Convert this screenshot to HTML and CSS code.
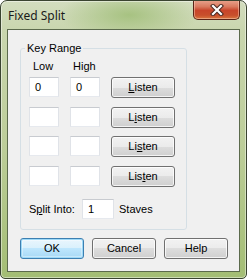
FILE: index.html
```html
<!DOCTYPE html>
<html>
<head>
<meta charset="utf-8">
<link rel="stylesheet" href="styles.css">
</head>
<body>
<div class="window">
  <div class="titlebar">
    <span class="title">Fixed Split</span>
    <div class="close">
      <svg width="14" height="12" viewBox="0 0 14 12">
        <path d="M3 2 L11 10 M11 2 L3 10" stroke="#4a2a22" stroke-width="4.2" stroke-linecap="square" fill="none"/>
        <path d="M3 2 L11 10 M11 2 L3 10" stroke="#ffffff" stroke-width="2.2" stroke-linecap="square" fill="none"/>
      </svg>
    </div>
  </div>
  <div class="client">
    <fieldset class="group">
      <legend>Key Range</legend>
      <div class="group-body">
        <div class="grid">
          <span class="col-label low">Low</span>
          <span class="col-label high">High</span>
          <span class="col-label"></span>
          <div class="edit">0</div>
          <div class="edit">0</div>
          <div class="btn"><u>L</u>isten</div>
          <div class="edit"></div>
          <div class="edit"></div>
          <div class="btn">L<u>i</u>sten</div>
          <div class="edit"></div>
          <div class="edit"></div>
          <div class="btn">Li<u>s</u>ten</div>
          <div class="edit"></div>
          <div class="edit"></div>
          <div class="btn">Lis<u>t</u>en</div>
        </div>
        <div class="split-row">
          <span class="split-label">S<u>p</u>lit Into:</span>
          <div class="edit split">1</div>
          <span class="staves">Staves</span>
        </div>
      </div>
    </fieldset>
    <div class="actions">
      <div class="btn default">OK</div>
      <div class="btn">Cancel</div>
      <div class="btn">Help</div>
    </div>
  </div>
</div>
</body>
</html>
```

FILE: styles.css
```css
html, body {
  margin: 0;
  padding: 0;
  background: #ffffff;
}

.window {
  box-sizing: border-box;
  width: 247px;
  height: 279px;
  border: 1px solid #3a4430;
  border-radius: 7px 7px 5px 5px;
  background:
    radial-gradient(ellipse 70px 26px at 128px 14px, rgba(160, 190, 120, 0.85), rgba(160, 190, 120, 0) 100%),
    linear-gradient(to bottom, #d3ddbf 0px, #c9d6ae 30px, #bccd98 150px, #a3bd74 100%);
  box-shadow: inset 0 0 0 1px rgba(255, 255, 255, 0.45);
  display: flex;
  flex-direction: column;
  overflow: hidden;
  font-family: "Liberation Sans", Arial, sans-serif;
  font-size: 11px;
  color: #000;
}

.titlebar {
  height: 28px;
  display: flex;
  align-items: flex-start;
  justify-content: space-between;
}

.title {
  font-family: "Noto Sans", "Liberation Sans", sans-serif;
  font-size: 12px;
  line-height: 16px;
  color: #1a1a1a;
  margin: 7px 0 0 7px;
}

.close {
  box-sizing: border-box;
  width: 47px;
  height: 20px;
  margin: -1px 6px 0 0;
  border: 1px solid #5a2417;
  border-top: none;
  border-radius: 0 0 5px 5px;
  background: linear-gradient(to bottom, #e9a58f 0%, #d97a5f 35%, #c8452a 55%, #c84f2c 80%, #d9773f 100%);
  box-shadow: inset 0 0 0 1px rgba(255, 220, 200, 0.45);
  display: flex;
  align-items: center;
  justify-content: center;
}

.close svg {
  display: block;
}

.client {
  box-sizing: border-box;
  height: 243px;
  margin: 0 6px;
  border: 1px solid #5b6a4c;
  background: #f0f0f0;
  padding: 12px 0 0 12px;
}

.group {
  box-sizing: border-box;
  width: 167px;
  margin: 0;
  padding: 0;
  border: 1px solid #d5dfe5;
  border-radius: 3px;
  min-width: 0;
}

.group legend {
  margin-left: 4px;
  padding: 0 2px;
  font-size: 11px;
  line-height: 13px;
}

.group-body {
  padding: 5px 0 10px 8px;
}

.grid {
  display: grid;
  grid-template-columns: 30px 30px 64px;
  column-gap: 11px;
  row-gap: 8.5px;
  align-items: start;
}

.grid .col-label {
  line-height: 13px;
  height: 13px;
  margin-bottom: -4.5px;
}

.col-label.low {
  padding-left: 4px;
}

.col-label.high {
  padding-left: 3px;
}

.edit {
  box-sizing: border-box;
  height: 20px;
  background: #ffffff;
  border: 1px solid;
  border-color: #c8cbd0 #e0e3e8 #e6e9ee #e0e3e8;
  padding-left: 5px;
  line-height: 18px;
}

.btn {
  box-sizing: border-box;
  height: 21px;
  border: 1px solid #707070;
  border-radius: 3px;
  background: linear-gradient(to bottom, #f2f2f2 0%, #ebebeb 50%, #dddddd 50%, #cfcfcf 100%);
  box-shadow: inset 0 0 0 1px rgba(255, 255, 255, 0.75);
  text-align: center;
  line-height: 19px;
}

.btn u {
  text-decoration-thickness: 1px;
  text-underline-offset: 1px;
}

.split-row {
  display: flex;
  align-items: center;
  margin-top: 12px;
}

.split-label {
  width: 53px;
}

.split-label u {
  text-underline-offset: 1px;
}

.edit.split {
  width: 32px;
  height: 20px;
  line-height: 18px;
}

.staves {
  margin-left: 5px;
}

.actions {
  display: flex;
  gap: 8px;
  margin-top: 8px;
}

.actions .btn {
  width: 64px;
}

.btn.default {
  border-color: #3c7fb1;
  background: linear-gradient(to bottom, #eaf6fd 0%, #d9f0fc 50%, #bee6fd 50%, #a7d9f5 100%);
  box-shadow: inset 0 0 0 1px #9ed9f7, inset 0 0 0 2px rgba(255, 255, 255, 0.35);
}
```
